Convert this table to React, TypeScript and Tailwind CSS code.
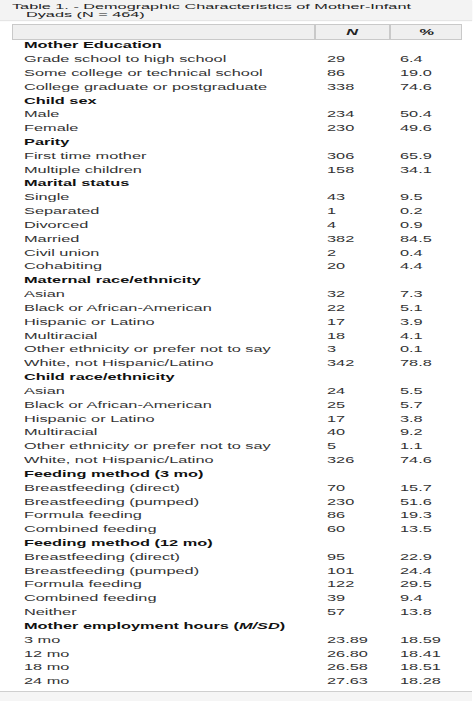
import React from "react";

type Row = { label: React.ReactNode; n?: string; p?: string; head?: boolean };

const rows: Row[] = [
  { label: "Mother Education", head: true },
  { label: "Grade school to high school", n: "29", p: "6.4" },
  { label: "Some college or technical school", n: "86", p: "19.0" },
  { label: "College graduate or postgraduate", n: "338", p: "74.6" },
  { label: "Child sex", head: true },
  { label: "Male", n: "234", p: "50.4" },
  { label: "Female", n: "230", p: "49.6" },
  { label: "Parity", head: true },
  { label: "First time mother", n: "306", p: "65.9" },
  { label: "Multiple children", n: "158", p: "34.1" },
  { label: "Marital status", head: true },
  { label: "Single", n: "43", p: "9.5" },
  { label: "Separated", n: "1", p: "0.2" },
  { label: "Divorced", n: "4", p: "0.9" },
  { label: "Married", n: "382", p: "84.5" },
  { label: "Civil union", n: "2", p: "0.4" },
  { label: "Cohabiting", n: "20", p: "4.4" },
  { label: "Maternal race/ethnicity", head: true },
  { label: "Asian", n: "32", p: "7.3" },
  { label: "Black or African-American", n: "22", p: "5.1" },
  { label: "Hispanic or Latino", n: "17", p: "3.9" },
  { label: "Multiracial", n: "18", p: "4.1" },
  { label: "Other ethnicity or prefer not to say", n: "3", p: "0.1" },
  { label: "White, not Hispanic/Latino", n: "342", p: "78.8" },
  { label: "Child race/ethnicity", head: true },
  { label: "Asian", n: "24", p: "5.5" },
  { label: "Black or African-American", n: "25", p: "5.7" },
  { label: "Hispanic or Latino", n: "17", p: "3.8" },
  { label: "Multiracial", n: "40", p: "9.2" },
  { label: "Other ethnicity or prefer not to say", n: "5", p: "1.1" },
  { label: "White, not Hispanic/Latino", n: "326", p: "74.6" },
  { label: "Feeding method (3 mo)", head: true },
  { label: "Breastfeeding (direct)", n: "70", p: "15.7" },
  { label: "Breastfeeding (pumped)", n: "230", p: "51.6" },
  { label: "Formula feeding", n: "86", p: "19.3" },
  { label: "Combined feeding", n: "60", p: "13.5" },
  { label: "Feeding method (12 mo)", head: true },
  { label: "Breastfeeding (direct)", n: "95", p: "22.9" },
  { label: "Breastfeeding (pumped)", n: "101", p: "24.4" },
  { label: "Formula feeding", n: "122", p: "29.5" },
  { label: "Combined feeding", n: "39", p: "9.4" },
  { label: "Neither", n: "57", p: "13.8" },
  {
    label: (
      <>
        Mother employment hours (<i>M/SD</i>)
      </>
    ),
    head: true,
  },
  { label: "3 mo", n: "23.89", p: "18.59" },
  { label: "12 mo", n: "26.80", p: "18.41" },
  { label: "18 mo", n: "26.58", p: "18.51" },
  { label: "24 mo", n: "27.63", p: "18.28" },
];

function S({ children, className = "" }: { children: React.ReactNode; className?: string }) {
  return (
    <span className={"inline-block whitespace-nowrap origin-left scale-x-[1.92] " + className}>
      {children}
    </span>
  );
}

export default function App() {
  return (
    <div
      className="w-[474px] h-[701px] bg-white overflow-hidden text-[8.5px] leading-[8px] text-[#333]"
      style={{ fontFamily: '"Liberation Sans", Arial, sans-serif' }}
    >
      <div className="w-[472px] h-[20px] bg-[#f3f3f3] shadow-[0_1px_1px_rgba(0,0,0,0.10)] pl-[12px] pt-[3px] text-[8px] leading-[8.3px] text-[#222]">
        <div>
          <span className="inline-block whitespace-nowrap origin-left scale-x-[2.03]">
            Table 1. - Demographic Characteristics of Mother-Infant
          </span>
        </div>
        <div className="pl-[14px]">
          <span className="inline-block whitespace-nowrap origin-left scale-x-[2.03]">Dyads (N = 464)</span>
        </div>
      </div>

      <div className="ml-[12px] mt-[4px] w-[450px]">
        <div className="grid grid-cols-[301px_75px_74px] h-[16px] bg-[#efefef] border border-[#c9c9c9]">
          <div />
          <div className="flex items-center justify-center border-l-2 border-[#c9c9c9] font-bold text-[#222]">
            <span className="inline-block scale-x-[1.92] italic">N</span>
          </div>
          <div className="flex items-center justify-center border-l-2 border-[#c9c9c9] font-bold text-[#222]">
            <span className="inline-block scale-x-[1.92]">%</span>
          </div>
        </div>

        <div className="flex flex-col">
          {rows.map((r, i) => (
            <div key={i} className="grid grid-cols-[301px_75px_74px] h-[13.84px] pt-[1.2px]">
              <div className={"pl-[12px] " + (r.head ? "font-bold text-[#111]" : "")}>
                <S>{r.label}</S>
              </div>
              <div className="pl-[14px]">{r.n && <S>{r.n}</S>}</div>
              <div className="pl-[12px]">{r.p && <S>{r.p}</S>}</div>
            </div>
          ))}
        </div>
      </div>

      <div className="mt-[1.5px] w-[472px] h-[12px] bg-[#f5f5f5] border-t border-[#cfcfcf]" />
    </div>
  );
}
